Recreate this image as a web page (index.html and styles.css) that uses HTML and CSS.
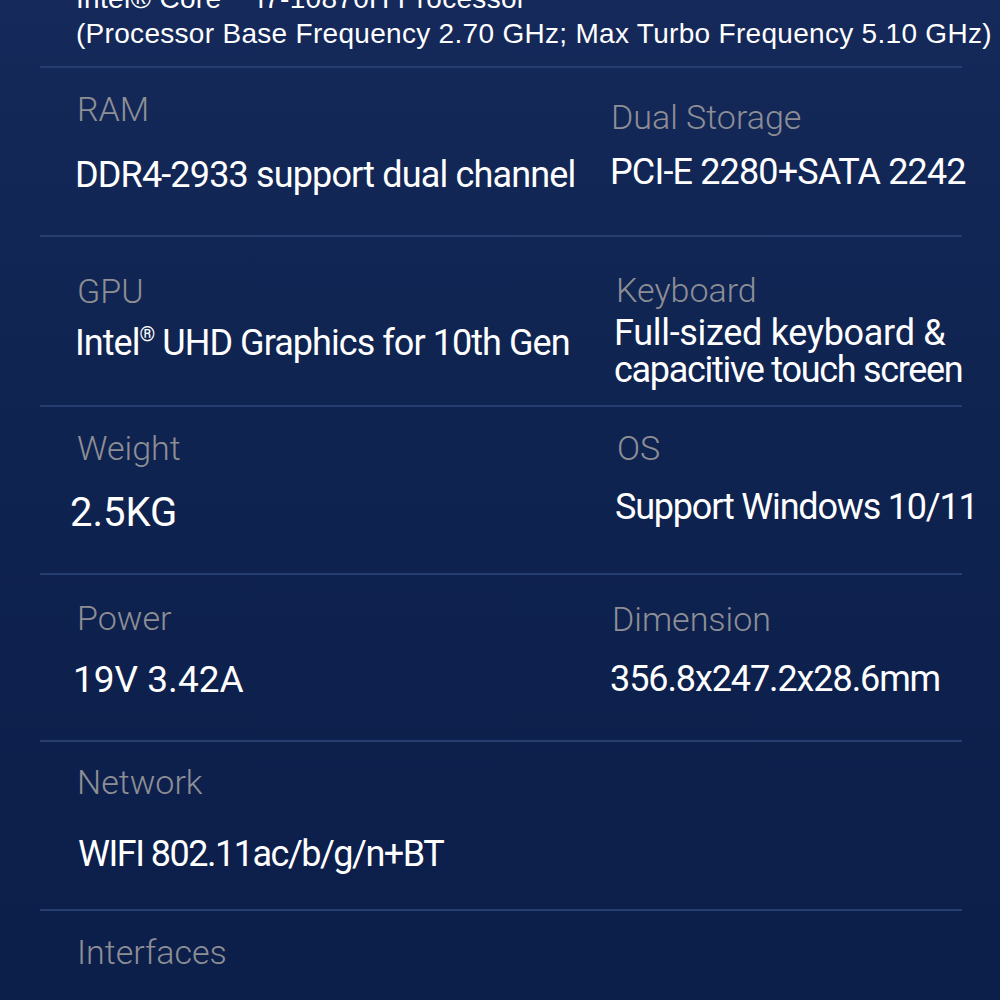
FILE: index.html
```html
<!DOCTYPE html>
<html lang="en">
<head>
<meta charset="utf-8">
<title>Specifications</title>
<link rel="stylesheet" href="styles.css">
</head>
<body>
<main class="page">
  <div class="cpu">
    <div class="cpu-line">Intel® Core™ i7-10870H Processor</div>
    <div class="cpu-line">(Processor Base Frequency 2.70 GHz; Max Turbo Frequency 5.10 GHz)</div>
  </div>

  <section class="row">
    <div class="cell cell-ram">
      <div class="label">RAM</div>
      <div class="value">DDR4-2933 support dual channel</div>
    </div>
    <div class="cell cell-storage">
      <div class="label">Dual Storage</div>
      <div class="value">PCI-E 2280+SATA 2242</div>
    </div>
  </section>

  <section class="row row-gpu">
    <div class="cell cell-gpu">
      <div class="label">GPU</div>
      <div class="value">Intel<sup class="reg">®</sup> UHD Graphics for 10th Gen</div>
    </div>
    <div class="cell cell-keyboard">
      <div class="label">Keyboard</div>
      <div class="value"><span class="line-a">Full-sized keyboard &amp;</span><br><span class="line-b">capacitive touch screen</span></div>
    </div>
  </section>

  <section class="row row-weight">
    <div class="cell cell-weight">
      <div class="label">Weight</div>
      <div class="value">2.5KG</div>
    </div>
    <div class="cell cell-os">
      <div class="label">OS</div>
      <div class="value">Support Windows 10/11</div>
    </div>
  </section>

  <section class="row row-power">
    <div class="cell cell-power">
      <div class="label">Power</div>
      <div class="value">19V 3.42A</div>
    </div>
    <div class="cell cell-dimension">
      <div class="label">Dimension</div>
      <div class="value">356.8x247.2x28.6mm</div>
    </div>
  </section>

  <section class="row">
    <div class="cell cell-network">
      <div class="label">Network</div>
      <div class="value">WIFI 802.11ac/b/g/n+BT</div>
    </div>
  </section>

  <section class="row row-last">
    <div class="cell cell-interfaces">
      <div class="label">Interfaces</div>
    </div>
  </section>
</main>
</body>
</html>
```

FILE: styles.css
```css
html, body {
  margin: 0;
  padding: 0;
}

body {
  background: #0d1f4b;
}

.page {
  width: 1000px;
  height: 1000px;
  overflow: hidden;
  background: linear-gradient(180deg, #15295a 0%, #0f2350 45%, #0c1e4a 100%);
  font-family: Roboto, "Liberation Sans", sans-serif;
  color: #ffffff;
}

.cpu {
  margin-top: -19px;
  height: 85px;
  padding-left: 76px;
  font-family: "Liberation Sans", Arial, sans-serif;
  font-size: 28px;
  line-height: 35px;
  letter-spacing: 0.3px;
  color: #ffffff;
}

.cpu-line {
  white-space: nowrap;
}

.row {
  margin-left: 40px;
  width: 922px;
  height: 169px;
  box-sizing: border-box;
  border-top: 2px solid #263e6f;
  padding-left: 35px;
  display: grid;
  grid-template-columns: 535px 1fr;
}

.row-gpu { height: 170px; }
.row-weight { height: 168px; }
.row-power { height: 167px; }
.row-last { height: 120px; }

.cell {
  padding-top: 20px;
}

.label {
  padding-left: 2px;
  font-family: Roboto, "Liberation Sans", sans-serif;
  font-weight: 300;
  font-size: 34px;
  line-height: 40px;
  color: #8e8f95;
}

.value {
  margin-top: 27px;
  font-family: Roboto, "Liberation Sans", sans-serif;
  font-size: 36px;
  line-height: 40px;
  white-space: nowrap;
  color: #ffffff;
}

.reg {
  font-size: 20px;
  line-height: 0;
  vertical-align: 14px;
}

.cell-ram { padding-top: 21px; }
.cell-ram .value { margin-top: 26px; letter-spacing: -0.85px; }

.cell-storage { padding-top: 29px; }
.cell-storage .label { padding-left: 1px; }
.cell-storage .value { margin-top: 15px; letter-spacing: -0.85px; }

.cell-gpu { padding-top: 34px; }
.cell-gpu .value { margin-top: 12px; letter-spacing: -0.95px; }

.cell-keyboard { padding-top: 33px; padding-left: 4px; }
.cell-keyboard .value { margin-top: 5px; line-height: 37px; }
.line-a { letter-spacing: -0.3px; }
.line-b { letter-spacing: -1.3px; }

.cell-weight { padding-top: 21px; }
.cell-weight .value { margin-top: 25px; margin-left: -5px; font-size: 40px; }

.cell-os { padding-top: 21px; padding-left: 5px; }
.cell-os .value { margin-top: 19px; letter-spacing: -1.2px; }

.cell-power { padding-top: 23px; }
.cell-power .value { margin-top: 22px; margin-left: -2px; font-size: 37px; }

.cell-dimension { padding-top: 24px; }
.cell-dimension .label { padding-left: 2px; }
.cell-dimension .value { margin-top: 20px; letter-spacing: -1.1px; }

.cell-network { padding-top: 20px; }
.cell-network .value { margin-top: 32px; margin-left: 3px; letter-spacing: -1.5px; }

.cell-interfaces { padding-top: 21px; }
```
